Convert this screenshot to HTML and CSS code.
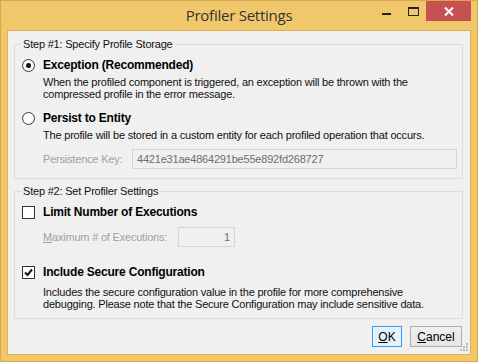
FILE: index.html
```html
<!DOCTYPE html>
<html lang="en">
  <head>
    <meta charset="UTF-8" />
    <title>Profiler Settings</title>
    <link rel="stylesheet" href="styles.css">
  </head>
  <body>
    <div class="window">
      <div class="titlebar">
        <div class="title">Profiler Settings</div>
        <div class="controls">
          <div class="ctl min">
            <svg width="9" height="2" viewBox="0 0 9 2"><rect width="9" height="2" fill="#222"/></svg>
          </div>
          <div class="ctl max">
            <svg width="11" height="9" viewBox="0 0 11 9"><rect x="0.5" y="0.5" width="10" height="8" fill="none" stroke="#222"/><rect x="0" y="0" width="11" height="2" fill="#222"/></svg>
          </div>
          <div class="ctl close">
            <svg width="10" height="9" viewBox="0 0 10 9"><path d="M1 0.5 L9 8.5 M9 0.5 L1 8.5" stroke="#fff" stroke-width="2"/></svg>
          </div>
        </div>
      </div>

      <div class="client">
        <fieldset class="group storage">
          <legend>Step #1: Specify Profile Storage</legend>
          <div class="option first">
            <span class="radio checked"></span>
            <span class="option-label">Exception (Recommended)</span>
          </div>
          <p class="desc">
            When the profiled component is triggered, an exception will be thrown with the<br />
            compressed profile in the error message.
          </p>
          <div class="option second">
            <span class="radio"></span>
            <span class="option-label">Persist to Entity</span>
          </div>
          <p class="desc">
            The profile will be stored in a custom entity for each profiled operation that occurs.
          </p>
          <div class="field key-row">
            <span class="field-label key-label">Persistence Key:</span>
            <div class="textbox key-box">4421e31ae4864291be55e892fd268727</div>
          </div>
        </fieldset>

        <fieldset class="group settings">
          <legend>Step #2: Set Profiler Settings</legend>
          <div class="option first">
            <span class="checkbox"></span>
            <span class="option-label">Limit Number of Executions</span>
          </div>
          <div class="field max-row">
            <span class="field-label max-label"><u>M</u>aximum # of Executions:</span>
            <div class="textbox max-box">1</div>
          </div>
          <div class="option secure">
            <span class="checkbox checked">
              <svg width="11" height="11" viewBox="0 0 11 11"><path d="M2 5.5 L4.5 8 L9 2.5" fill="none" stroke="#111" stroke-width="2"/></svg>
            </span>
            <span class="option-label">Include Secure Configuration</span>
          </div>
          <p class="desc secure-desc">
            Includes the secure configuration value in the profile for more comprehensive<br />
            debugging. Please note that the Secure Configuration may include sensitive data.
          </p>
        </fieldset>

        <div class="buttons">
          <button class="btn default"><u>O</u>K</button>
          <button class="btn"><u>C</u>ancel</button>
        </div>

        <svg class="grip" width="10" height="10" viewBox="0 0 10 10">
          <rect x="7" y="1" width="2" height="2" fill="#b8b8b8"/>
          <rect x="4" y="4" width="2" height="2" fill="#b8b8b8"/>
          <rect x="7" y="4" width="2" height="2" fill="#b8b8b8"/>
          <rect x="1" y="7" width="2" height="2" fill="#b8b8b8"/>
          <rect x="4" y="7" width="2" height="2" fill="#b8b8b8"/>
          <rect x="7" y="7" width="2" height="2" fill="#b8b8b8"/>
        </svg>
      </div>
    </div>
  </body>
</html>
```

FILE: styles.css
```css
:root {
  --frame: #f0c86b;
  --frame-edge: #d5aa4c;
  --face: #f0f0f0;
  --group-line: #dcdcdc;
  --disabled: #a0a0a0;
}

body {
  margin: 0;
  font-family: "Liberation Sans", Arial, sans-serif;
  font-size: 11px;
  letter-spacing: -0.2px;
  color: #111;
}

/* Window frame */
.window {
  width: 478px;
  height: 362px;
  box-sizing: border-box;
  border: 1px solid var(--frame-edge);
  background-color: var(--frame);
  display: flex;
  flex-direction: column;
}

.titlebar {
  height: 29px;
  display: grid;
  grid-template-columns: 1fr auto 1fr;
}

.title {
  grid-column: 2;
  font-family: "Open Sans", sans-serif;
  font-size: 15px;
  letter-spacing: -0.25px;
  line-height: 29px;
  color: #333;
}

.controls {
  grid-column: 3;
  justify-self: end;
  display: flex;
  margin-right: 6px;
  height: 20px;
}

.ctl {
  width: 26px;
  height: 20px;
  display: flex;
  align-items: center;
  justify-content: center;
}

.ctl.min {
  width: 27px;
  align-items: flex-end;
  padding-bottom: 6px;
  box-sizing: border-box;
}

.ctl.max {
  padding-top: 1px;
  box-sizing: border-box;
}

.ctl.close {
  width: 45px;
  background-color: #c75050;
}

/* Client area */
.client {
  position: relative;
  flex: 1;
  margin: 0 6px 6px;
  border: 1px solid #d9b25b;
  background-color: var(--face);
  padding: 6px 7px 0 6px;
}

.group {
  margin: 0;
  padding: 0 0 0 6px;
  border: 1px solid var(--group-line);
  min-width: 0;
}

.group legend {
  padding: 0 2px;
  line-height: 14px;
}

.storage {
  padding-bottom: 9px;
}

.settings {
  margin-top: 5px;
  padding-bottom: 8px;
}

.option {
  display: flex;
  align-items: center;
  height: 16px;
  margin-left: 1px;
  gap: 8px;
}

.option-label {
  font-weight: bold;
  font-size: 12px;
  color: #000;
}

.storage .first {
  margin-top: 6px;
}

.storage .second {
  margin-top: 10px;
}

.settings .first {
  margin-top: 6px;
}

.settings .secure {
  margin-top: 17px;
}

.radio {
  width: 13px;
  height: 13px;
  box-sizing: border-box;
  border: 1px solid #3c3c3c;
  border-radius: 50%;
  background: radial-gradient(circle, #ffffff 40%, #ececec 100%);
  display: flex;
  align-items: center;
  justify-content: center;
}

.radio.checked::after {
  content: "";
  width: 5px;
  height: 5px;
  border-radius: 50%;
  background-color: #111;
}

.checkbox {
  width: 13px;
  height: 13px;
  box-sizing: border-box;
  border: 1px solid #333;
  background-color: #fff;
  display: flex;
  align-items: center;
  justify-content: center;
}

.desc {
  margin: 3px 0 0 22px;
  line-height: 12px;
}

.secure-desc {
  margin-top: 6px;
}

.field {
  display: flex;
  align-items: center;
  height: 20px;
  margin-left: 22px;
}

.key-row {
  margin-top: 8px;
}

.max-row {
  margin-top: 7px;
}

.field-label {
  color: var(--disabled);
}

.key-label {
  width: 89px;
}

.max-label {
  width: 135px;
}

.textbox {
  height: 20px;
  box-sizing: border-box;
  border: 1px solid #d4d4d4;
  background-color: var(--face);
  color: #6d6d6d;
  padding: 0 4px;
  line-height: 18px;
}

.key-box {
  width: 325px;
}

.max-box {
  width: 57px;
  text-align: right;
}

/* Buttons */
.buttons {
  display: flex;
  justify-content: flex-end;
  gap: 8px;
  margin: 7px 1px 0 0;
}

.btn {
  height: 21px;
  padding: 0;
  font-family: "Liberation Sans", Arial, sans-serif;
  font-size: 12px;
  color: #000;
  border: 1px solid #acacac;
  background: linear-gradient(#f0f0f0, #e5e5e5);
  width: 52px;
}

.btn.default {
  width: 30px;
  border-color: #3399ff;
  background: #e5f1fb;
}

.grip {
  position: absolute;
  right: 1px;
  bottom: 2px;
}
```
